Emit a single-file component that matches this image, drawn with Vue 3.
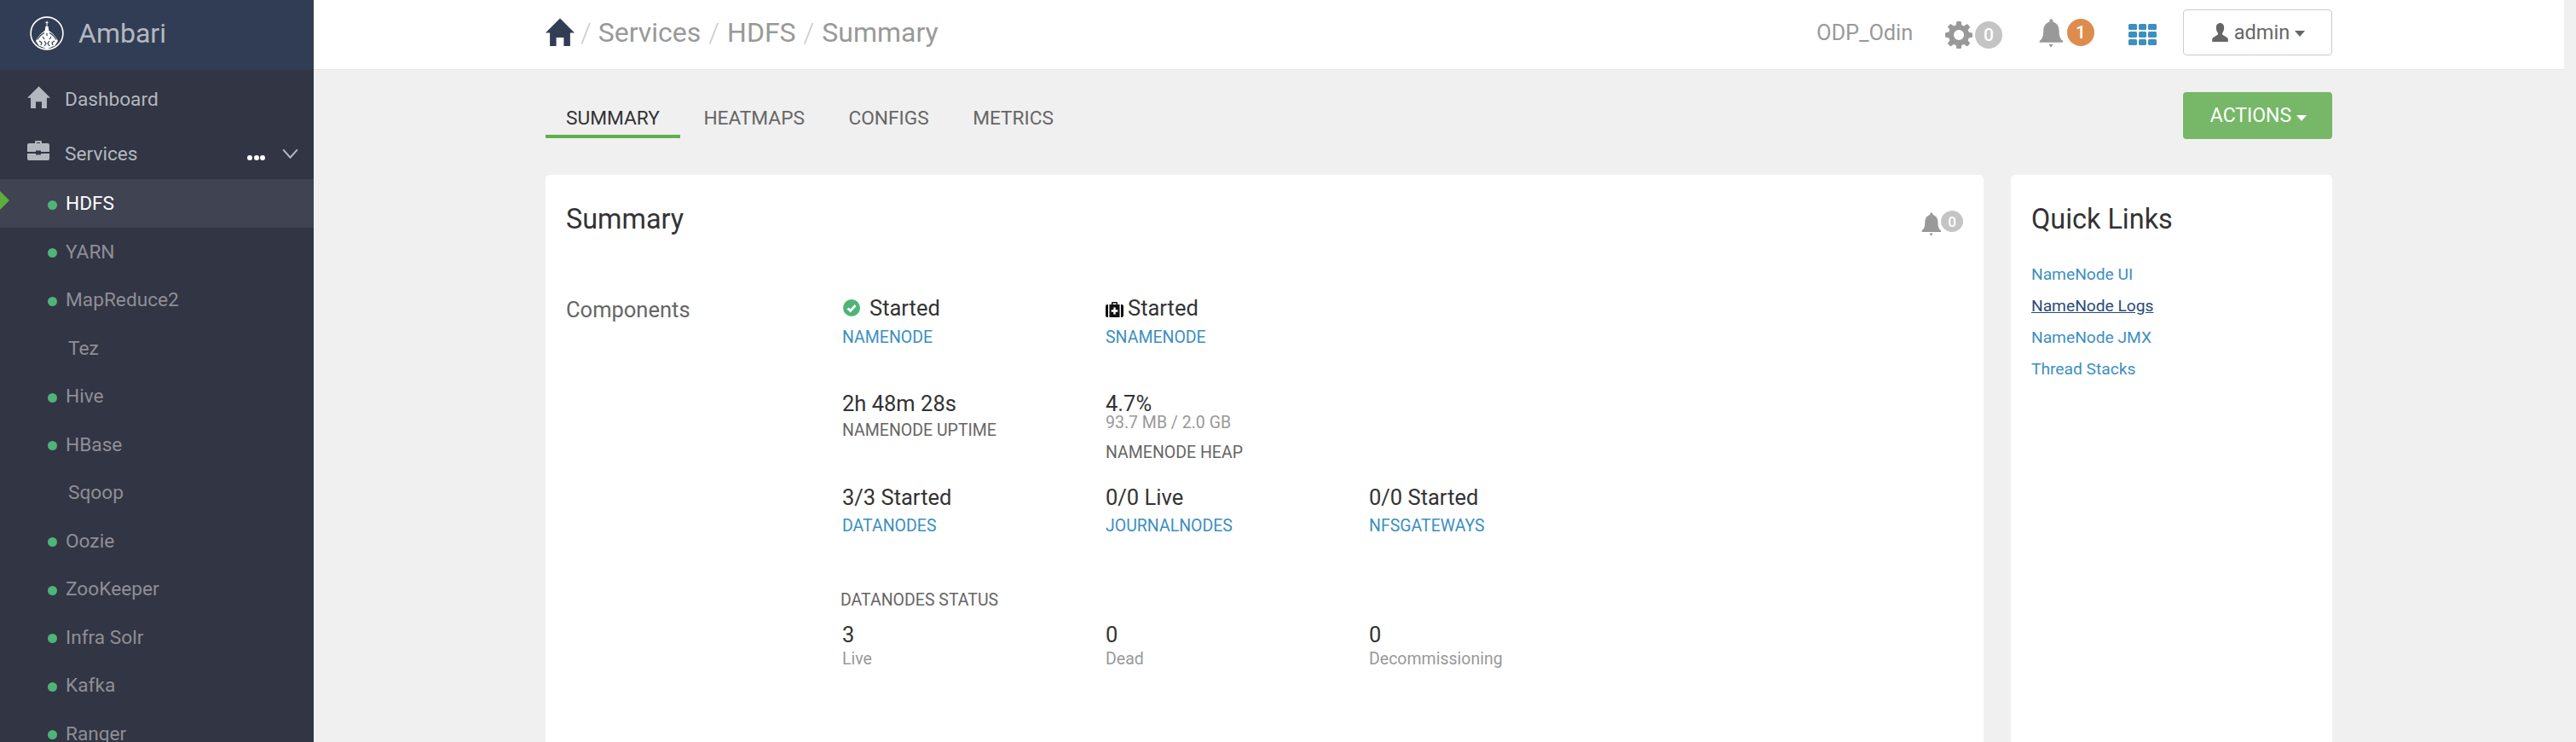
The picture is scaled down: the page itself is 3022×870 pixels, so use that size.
<script setup>
const services = [
  { name: 'HDFS', dot: true, active: true },
  { name: 'YARN', dot: true },
  { name: 'MapReduce2', dot: true },
  { name: 'Tez' },
  { name: 'Hive', dot: true },
  { name: 'HBase', dot: true },
  { name: 'Sqoop' },
  { name: 'Oozie', dot: true },
  { name: 'ZooKeeper', dot: true },
  { name: 'Infra Solr', dot: true },
  { name: 'Kafka', dot: true },
  { name: 'Ranger', dot: true }
]
const tabs = ['SUMMARY', 'HEATMAPS', 'CONFIGS', 'METRICS']
const links = ['NameNode UI', 'NameNode Logs', 'NameNode JMX', 'Thread Stacks']
const bell = 'M12 1.200c.9 0 1.600.7 1.600 1.600v.6c3 .8 4.600 3.400 4.600 6.600 0 4.400.9 6.100 2.800 7.700.5.5.2 1.300-.5 1.300H4c-.7 0-1-.8-.5-1.300 1.900-1.600 2.800-3.300 2.800-7.700 0-3.200 1.600-5.800 4.600-6.600v-.6c0-.9.7-1.600 1.100-1.600zM10.300 20.300h3.400L12 22.800z'
const house = 'M12 1 24 13h-3.600v11h-5.300v-7H8.900v7H3.600V13H0z'
</script>

<template>
  <div class="page">
    <aside class="side">
      <div class="brand">
        <svg class="logo" viewBox="0 0 40 40">
          <circle cx="20" cy="20" r="18.900" fill="none" stroke="#fff" stroke-width="1.600" />
          <path d="M20 5.500v6.500M18.300 7.500h3.400" stroke="#fff" stroke-width="1" fill="none" />
          <path d="M18.300 12h3.400l.6 5h-4.600z" fill="#fff" />
          <path d="M17.500 17h5c4 2.500 8 6.500 10.500 12l-3.500 5.500-9.500 4-9.500-4L7 29c2.500-5.500 6.500-9.500 10.500-12z" fill="#fff" />
          <path d="M17 19.500c-3.500 2-6.500 5-8 8M23 19.500c3.500 2 6.500 5 8 8M20 20v3M15 24l2 3M25 24l-2 3M11 29l3 2-1 3M29 29l-3 2 1 3M17 29l2 3-2 3M23 29l-2 3 2 3" stroke="#313d54" stroke-width="1.200" fill="none" />
        </svg>
        <span class="brand-name">Ambari</span>
      </div>
      <nav class="nav">
        <div class="nav-top nav-dash">
          <svg class="nav-icon" viewBox="0 0 24 24"><path :d="house" fill="#b3b8bf" /></svg>
          <span>Dashboard</span>
        </div>
        <div class="nav-top nav-services">
          <svg class="nav-icon case" viewBox="0 0 26 24">
            <path d="M9 4V2.500C9 1.500 9.800 1 10.500 1h5c.7 0 1.500.5 1.500 1.500V4h-2V3h-4v1z" fill="#b3b8bf" />
            <path d="M2 4h22c1 0 2 .8 2 2v8H16v-1.500h-6V14H0V6c0-1.200 1-2 2-2zM0 16h10v1.500h6V16h10v6c0 1.200-1 2-2 2H2c-1 0-2-.8-2-2z" fill="#b3b8bf" />
          </svg>
          <span>Services</span>
          <span class="more"><i></i><i></i><i></i></span>
          <svg class="chev" viewBox="0 0 20 14"><path d="M1 1.500 10 11.500 19 1.500" fill="none" stroke="#b3b8bf" stroke-width="2.200" /></svg>
        </div>
        <div v-for="s in services" :key="s.name" class="svc" :class="{ active: s.active, nodot: !s.dot }">
          <span v-if="s.active" class="marker"></span>
          <span v-if="s.dot" class="dot"></span>
          <span>{{ s.name }}</span>
        </div>
      </nav>
    </aside>

    <div class="main">
      <header class="top">
        <div class="crumbs">
          <svg class="crumb-home" viewBox="0 0 24 24"><path :d="house" fill="#313d54" /></svg>
          <span class="sep first">/</span><span>Services</span>
          <span class="sep">/</span><span>HDFS</span>
          <span class="sep">/</span><span>Summary</span>
        </div>
        <div class="top-right">
          <span class="cluster">ODP_Odin</span>
          <span class="op">
            <svg class="gear" viewBox="0 0 32 32">
              <path fill="#999" fill-rule="evenodd" d="M13.500 0h5l.9 4.400 2.600 1.100 3.800-2.500 3.400 3.400-2.500 3.800 1.100 2.600 4.200.9v5l-4.200.9-1.100 2.600 2.500 3.800-3.400 3.400-3.800-2.500-2.600 1.100-.9 4.400h-5l-.9-4.400-2.600-1.100-3.800 2.500-3.400-3.400 2.500-3.800-1.100-2.600L0 18.500v-5l4.200-.9 1.100-2.600-2.500-3.800L6.200 3 10 5.500l2.600-1.100zM16 10a6 6 0 1 0 0 12 6 6 0 0 0 0-12z" />
            </svg>
            <b class="badge grey">0</b>
          </span>
          <span class="alerts">
            <svg class="bell" viewBox="3 1 18 22"><path :d="bell" fill="#999" /></svg>
            <b class="badge orange">1</b>
          </span>
          <span class="grid-icon"><i v-for="n in 9" :key="n"></i></span>
          <button class="user-btn">
            <svg class="user" viewBox="0 0 22 26"><path d="M11 0c3.500 0 5.500 2.700 5.500 6.500 0 3-1 5.500-2.500 7.500v2l6.500 4c1 .7 1.500 1.700 1.500 3v3H0v-3c0-1.300.5-2.300 1.500-3L8 16v-2c-1.500-2-2.500-4.500-2.500-7.500C5.500 2.700 7.500 0 11 0z" fill="#666" /></svg>
            <span>admin</span><i class="caret"></i>
          </button>
        </div>
      </header>

      <div class="content">
        <div class="tabbar">
          <div class="tabs">
            <span v-for="(t, i) in tabs" :key="t" class="tab" :class="{ on: i === 0 }">{{ t }}</span>
          </div>
          <button class="actions">ACTIONS<i class="caret white"></i></button>
        </div>

        <div class="cards">
          <section class="card summary">
            <div class="card-head">
              <h2>Summary</h2>
              <span class="card-alert">
                <svg class="bell small" viewBox="3 1 18 22"><path :d="bell" fill="#999" /></svg>
                <b class="badge grey small">0</b>
              </span>
            </div>
            <div class="body">
              <div class="comp-label">Components</div>
              <div class="metrics">
                <div class="row r1">
                  <div class="cell">
                    <div class="val">
                      <svg class="check" viewBox="0 0 20 20"><circle cx="10" cy="10" r="10" fill="#4fb477" /><path d="M5.500 10.500 8.700 13.500 14.500 7" fill="none" stroke="#fff" stroke-width="2.800" /></svg>
                      <span class="started">Started</span>
                    </div>
                    <a class="link">NAMENODE</a>
                  </div>
                  <div class="cell">
                    <div class="val">
                      <svg class="medkit" viewBox="0 0 21 18">
                        <path d="M7 3V1.200C7 .5 7.500 0 8.200 0h4.600c.7 0 1.200.5 1.200 1.200V3h-1.500V1.500h-4V3z" fill="#111" />
                        <path fill="#111" fill-rule="evenodd" d="M4.500 3h12v15h-12zM9.300 6.500v2.700H6.700v2.600h2.600v2.700h2.400v-2.700h2.600V9.200h-2.600V6.500z" />
                        <path d="M3 3v15H2a2 2 0 0 1-2-2V5a2 2 0 0 1 2-2zM18 3h1a2 2 0 0 1 2 2v11a2 2 0 0 1-2 2h-1z" fill="#111" />
                      </svg>
                      <span>Started</span>
                    </div>
                    <a class="link">SNAMENODE</a>
                  </div>
                </div>
                <div class="row r2">
                  <div class="cell">
                    <div class="val">2h 48m 28s</div>
                    <div class="cap cap-up">NAMENODE UPTIME</div>
                  </div>
                  <div class="cell">
                    <div class="val">4.7%</div>
                    <div class="sub heap-sub">93.7 MB / 2.0 GB</div>
                    <div class="cap cap-heap">NAMENODE HEAP</div>
                  </div>
                </div>
                <div class="row r3">
                  <div class="cell"><div class="val">3/3 Started</div><a class="link">DATANODES</a></div>
                  <div class="cell"><div class="val">0/0 Live</div><a class="link">JOURNALNODES</a></div>
                  <div class="cell"><div class="val">0/0 Started</div><a class="link">NFSGATEWAYS</a></div>
                </div>
                <div class="status-title">DATANODES STATUS</div>
                <div class="row r4">
                  <div class="cell"><div class="val">3</div><div class="sub">Live</div></div>
                  <div class="cell"><div class="val">0</div><div class="sub">Dead</div></div>
                  <div class="cell"><div class="val">0</div><div class="sub">Decommissioning</div></div>
                </div>
              </div>
            </div>
          </section>

          <section class="card quick">
            <h2>Quick Links</h2>
            <ul>
              <li v-for="(l, i) in links" :key="l" :class="{ hover: i === 1 }">{{ l }}</li>
            </ul>
          </section>
        </div>
      </div>
    </div>
  </div>
</template>

<style>
html, body { margin: 0; background: #f0f0f0; overflow: hidden; }
</style>

<style scoped>
* { box-sizing: border-box; }
.page { display: flex; width: 3022px; height: 870px; overflow: hidden; font-family: Roboto, "Liberation Sans", sans-serif; background: #f0f0f0; color: #333; }
.side { width: 368px; flex: none; background: #323544; height: 870px; overflow: hidden; }
.brand { height: 82px; background: #313d54; display: flex; align-items: center; padding: 0 0 4px 35px; }
.logo { width: 40px; height: 40px; margin-top: -1px; }
.brand-name { margin-left: 17px; font-size: 32px; color: #b3b8bf; }
.nav-top { display: flex; align-items: center; padding-left: 32px; font-size: 22.700px; color: #b3b8bf; position: relative; }
.nav-dash { height: 68px; }
.nav-services { height: 60px; }
.nav-icon { width: 27px; height: 27px; margin-right: 17px; margin-top: -6px; flex: none; }
.nav-icon.case { width: 26px; height: 24px; margin-right: 18px; margin-top: -8px; }
.more { position: absolute; left: 290px; top: 32px; display: flex; gap: 1.500px; }
.more i { width: 6px; height: 6px; border-radius: 50%; background: #fff; }
.chev { position: absolute; left: 331px; top: 24px; width: 19px; height: 13px; }
.svc { height: 56.500px; display: flex; align-items: center; padding-left: 56px; font-size: 22.700px; color: #8e8f96; position: relative; }
.svc.nodot { padding-left: 80px; }
.svc.active { background: #404351; color: #fff; height: 57px; }
.dot { width: 11px; height: 11px; border-radius: 50%; background: #4fb477; margin-right: 10px; margin-top: 3px; flex: none; }
.marker { position: absolute; left: -21px; top: 9px; width: 32px; height: 32px; background: #5fac3f; clip-path: polygon(50% 0, 100% 50%, 50% 100%, 0 50%); }
.main { width: 2640px; flex: none; }
.top { width: 2640px; height: 82px; background: #fff; border-bottom: 1px solid #e6e6e6; display: flex; align-items: center; justify-content: space-between; padding: 0 272px; }
.crumbs { display: flex; align-items: center; font-size: 32px; color: #999; white-space: pre; margin-top: -6px; }
.crumb-home { width: 34px; height: 34px; margin-top: -2px; }
.sep { color: #ccc; margin: 0 9px; font-weight: 300; }
.sep.first { margin: 0 8px 0 7px; }
.top-right { display: flex; align-items: center; }
.cluster { font-size: 25.300px; color: #999; width: 151px; margin-top: -4px; }
.op { display: flex; align-items: center; width: 110px; }
.gear { width: 32px; height: 32px; margin-right: 3px; margin-top: 1px; }
.badge { display: inline-flex; align-items: center; justify-content: center; color: #fff; border-radius: 50%; font-weight: 500; font-size: 21px; width: 32px; height: 32px; }
.badge.grey { background: #c4c4c4; margin-top: 1px; }
.badge.orange { background: #dc8d4e; margin-top: -5px; }
.badge.small { width: 26px; height: 25px; font-size: 17px; margin: 0; }
.alerts { display: flex; align-items: center; width: 105px; }
.bell { width: 28px; height: 34px; margin-right: 5px; margin-top: -4px; }
.bell.small { width: 23px; height: 28px; margin: 2px 0 0; }
.grid-icon { display: grid; grid-template-columns: repeat(3, 9.500px); grid-auto-rows: 7px; gap: 2px 2px; width: 64px; margin-top: -1px; }
.grid-icon i { background: #3d8fc1; border-radius: 1.500px; }
.user-btn { width: 175px; height: 54px; background: #fff; border: 1px solid #ccc; border-radius: 4px; font: inherit; font-size: 23.500px; color: #666; display: flex; align-items: center; justify-content: center; margin-top: -6px; padding: 0; }
.user { width: 23px; height: 22px; margin-right: 5px; }
.caret { display: inline-block; width: 0; height: 0; border-left: 6px solid transparent; border-right: 6px solid transparent; border-top: 7px solid #666; margin-left: 6px; margin-top: 3px; }
.caret.white { border-top-color: #fff; vertical-align: middle; }
.content { padding: 0 272px; }
.tabbar { display: flex; justify-content: space-between; height: 123px; padding-top: 26px; }
.tabs { display: flex; }
.tab { height: 54px; padding: 17px 24px 0; font-size: 22.700px; color: #666; line-height: 28px; border-bottom: 4px solid transparent; margin-right: 3.500px; }
.tab.on { color: #333; border-bottom-color: #5fb04a; }
.actions { width: 175px; height: 55px; background: #76b768; color: #fff; border: 0; border-radius: 4px; font: inherit; font-size: 23px; padding: 0 0 0 2px; }
.cards { display: flex; gap: 32px; align-items: stretch; }
.card { background: #fff; border-radius: 5px; height: 700px; }
.summary { width: 1687px; padding: 0 24px; }
.quick { width: 377px; padding: 0 24px; }
.card-head { display: flex; justify-content: space-between; height: 105px; padding-top: 32px; }
h2 { margin: 0; font-weight: 400; font-size: 32.400px; line-height: 40px; color: #333; }
.card-alert { display: flex; align-items: flex-start; margin-top: 10px; }
.body { display: flex; }
.comp-label { width: 324px; font-size: 25.500px; color: #666; padding-top: 37px; line-height: 32px; }
.metrics { flex: 1; padding-top: 35px; }
.row { display: flex; }
.cell { width: 309px; }
.val { font-size: 25.500px; line-height: 32px; height: 32px; color: #333; display: flex; align-items: center; white-space: pre; }
.check { width: 20px; height: 20px; margin-right: 11px; margin-left: 1px; }
.medkit { width: 21px; height: 18px; margin-right: 5px; margin-top: 3px; }
.link { display: block; color: #3d8fc1; font-size: 19.500px; line-height: 24px; margin-top: 7px; }
.sub { color: #999; font-size: 19.500px; line-height: 24px; }
.heap-sub { margin-top: -5px; }
.cap { color: #666; font-size: 19.500px; line-height: 24px; }
.cap-up { margin-top: 4px; }
.cap-heap { margin-top: 11px; }
.r2 { margin-top: 49px; }
.r3 { margin-top: 24px; }
.r3 .link { margin-top: 6px; }
.status-title { color: #666; font-size: 19.500px; line-height: 24px; margin: 63px 0 0 -2px; }
.r4 { margin-top: 12px; }
.r4 .sub { margin-top: 1px; }
.quick h2 { padding-top: 32px; height: 105px; }
ul { list-style: none; margin: 0; padding: 0; }
li { color: #3d8fc1; font-size: 19.200px; height: 37px; line-height: 24px; }
li.hover { color: #2a4a78; text-decoration: underline; }
</style>
